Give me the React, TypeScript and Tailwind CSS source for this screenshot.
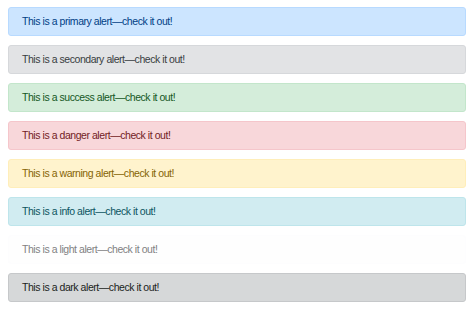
const alerts = [
  { name: "primary", cls: "bg-[#cce5ff] border-[#b8daff] text-[#004085]" },
  { name: "secondary", cls: "bg-[#e2e3e5] border-[#d6d8db] text-[#383d41]" },
  { name: "success", cls: "bg-[#d4edda] border-[#c3e6cb] text-[#155724]" },
  { name: "danger", cls: "bg-[#f8d7da] border-[#f5c6cb] text-[#721c24]" },
  { name: "warning", cls: "bg-[#fff3cd] border-[#ffeeba] text-[#856404]" },
  { name: "info", cls: "bg-[#d1ecf1] border-[#bee5eb] text-[#0c5460]" },
  { name: "light", cls: "bg-[#fefefe] border-[#fdfdfe] text-[#818182]" },
  { name: "dark", cls: "bg-[#d6d8d9] border-[#c6c8ca] text-[#1b1e21]" },
];

export default function App() {
  return (
    <div className="w-[474px] h-[310px] bg-white px-2 pt-[7px] flex flex-col gap-[9px] font-['Liberation_Sans',Arial,sans-serif]">
      {alerts.map((a) => (
        <div
          key={a.name}
          className={`h-[29px] flex items-center px-[13px] border rounded-[3px] text-[10.5px] tracking-[-0.45px] ${a.cls}`}
        >
          This is a {a.name} alert—check it out!
        </div>
      ))}
    </div>
  );
}
